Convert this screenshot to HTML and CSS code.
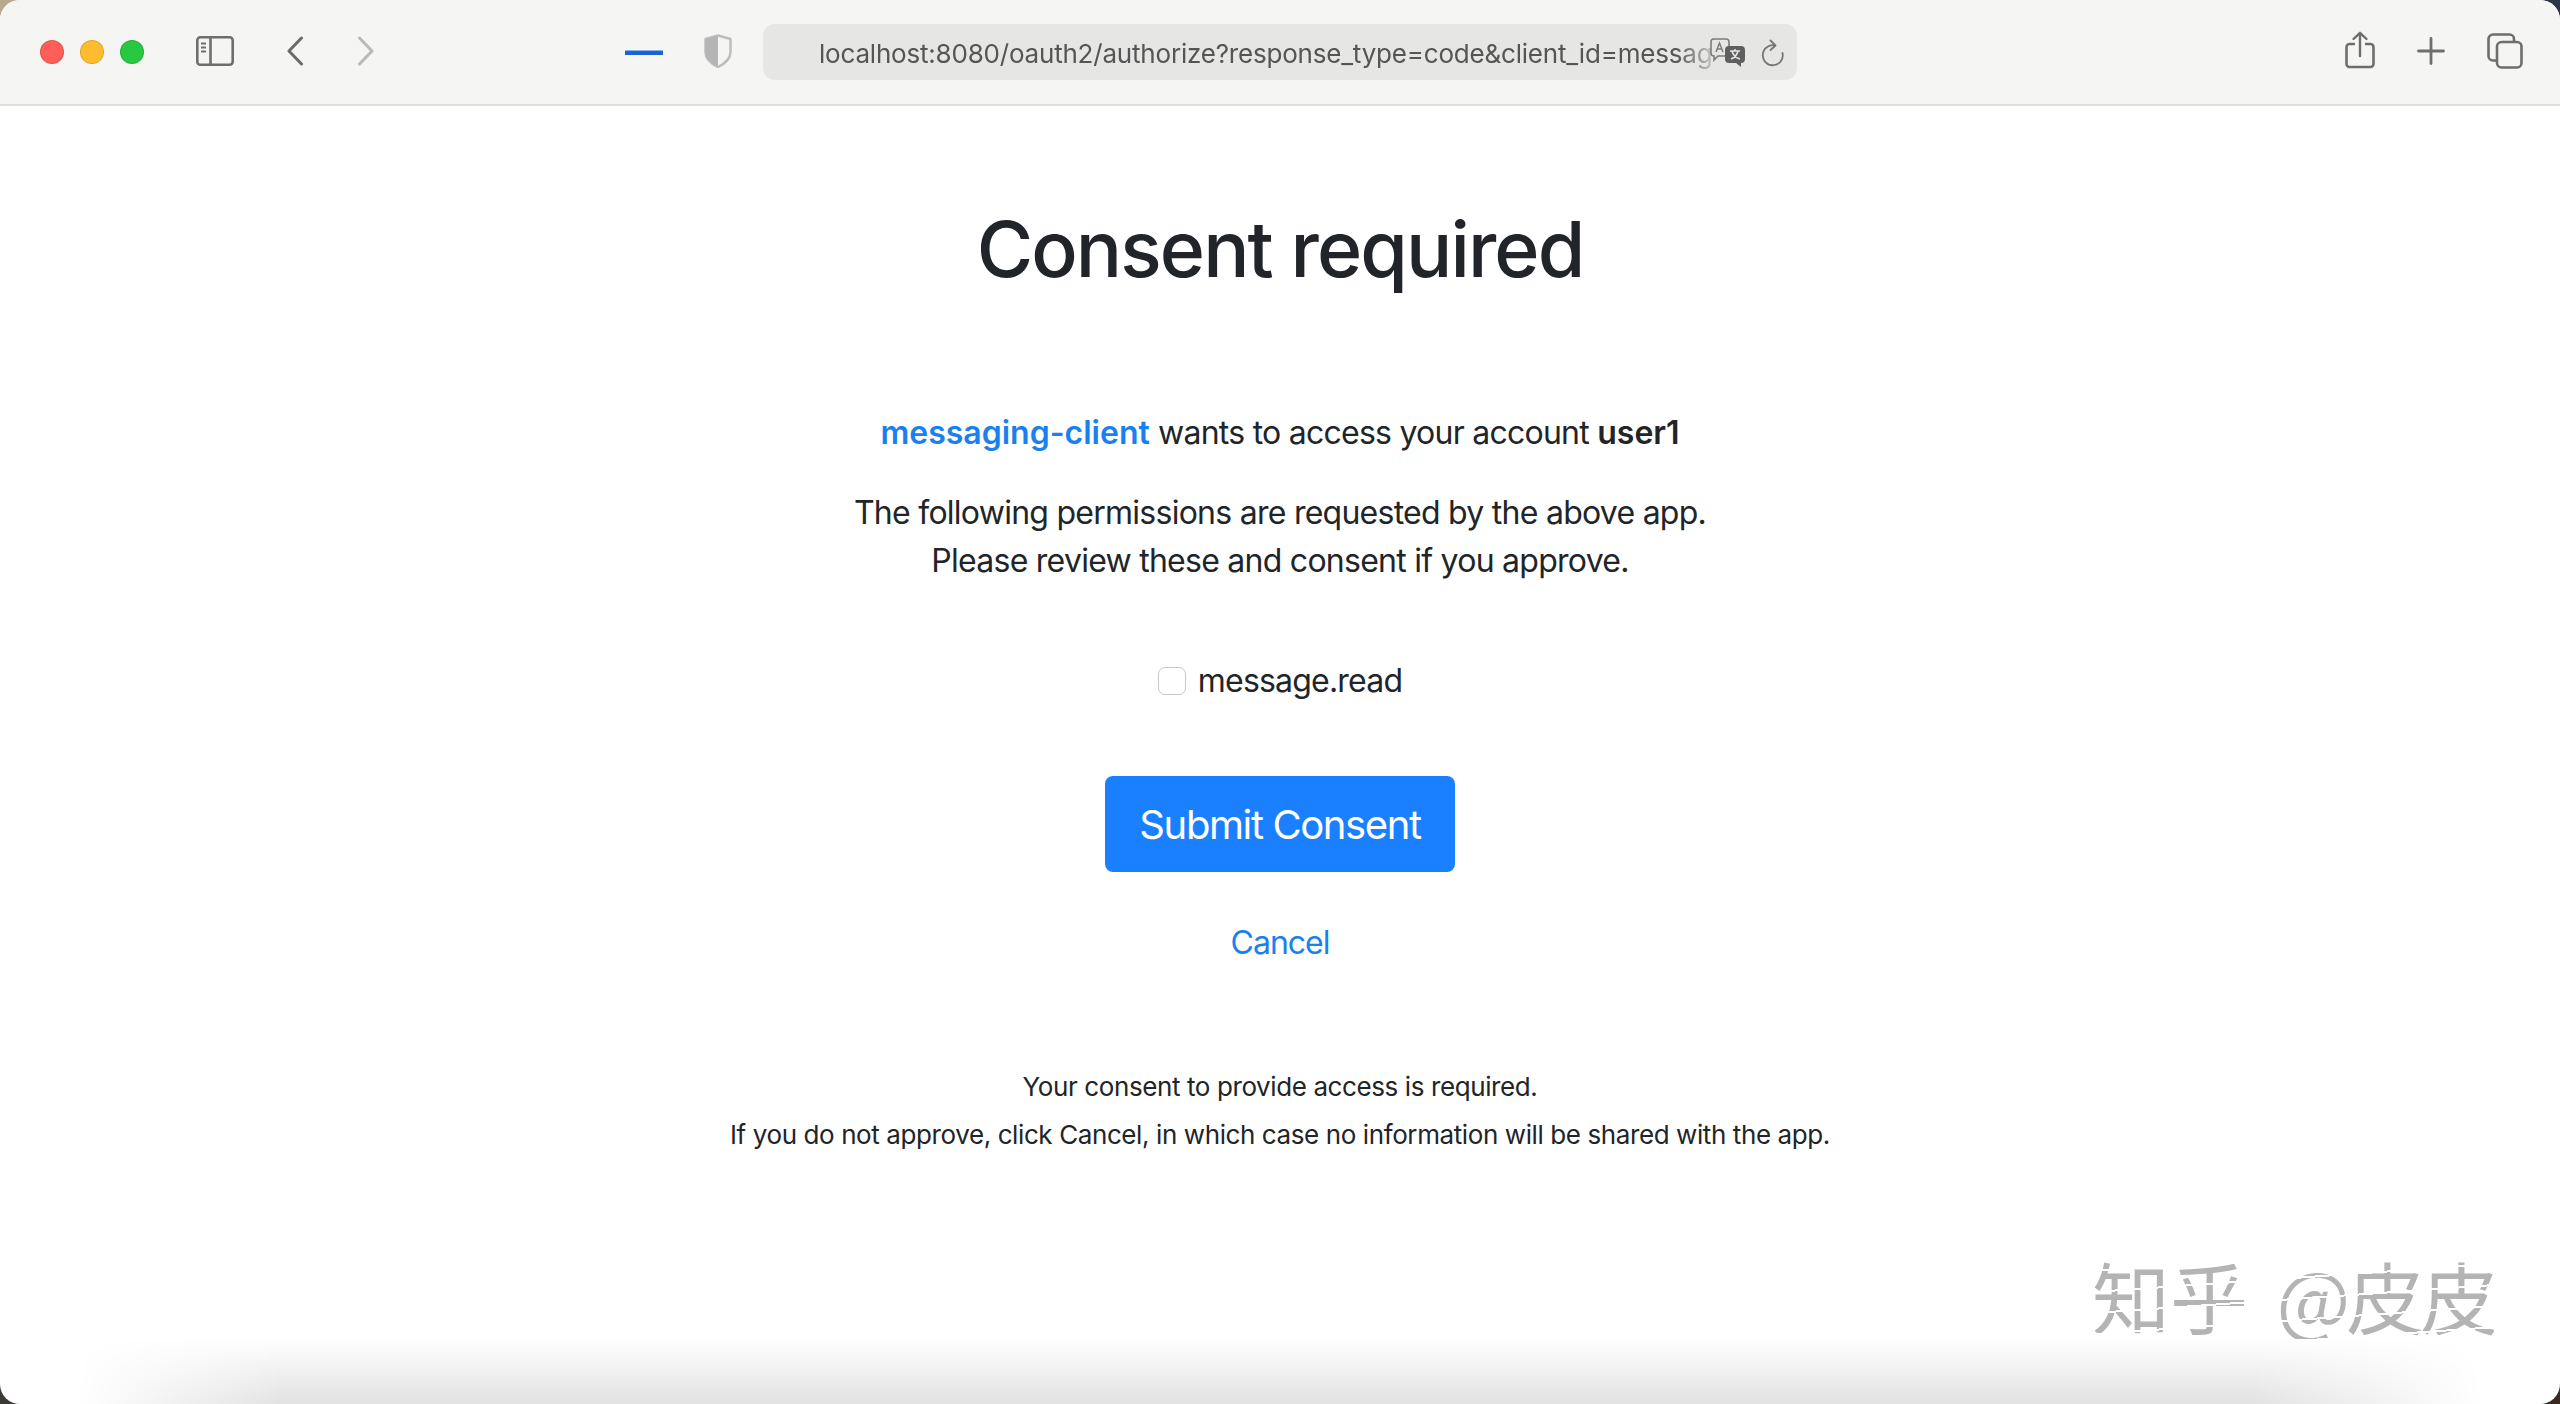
FILE: index.html
```html
<!DOCTYPE html>
<html lang="en">
<head>
<meta charset="utf-8">
<title>Consent required</title>
<link rel="stylesheet" href="styles.css">
</head>
<body>
<div class="window">
  <header class="toolbar">
    <div class="lights">
      <span class="light red"></span>
      <span class="light yellow"></span>
      <span class="light green"></span>
    </div>
    <svg class="icon sidebar" viewBox="0 0 38 30" width="38" height="30">
      <rect x="1.300" y="1.300" width="35.400" height="27.400" rx="3" fill="none" stroke="#6e6e6e" stroke-width="2.600"/>
      <path d="M14.500 1.500V28.500" stroke="#6e6e6e" stroke-width="2.600"/>
      <path d="M5 7.500h5M5 11.500h5M5 15.500h5" stroke="#6e6e6e" stroke-width="2"/>
    </svg>
    <svg class="icon back" viewBox="0 0 18 30" width="18" height="30">
      <path d="M15.500 2L3 15l12.500 13" fill="none" stroke="#6a6a6a" stroke-width="3" stroke-linecap="round" stroke-linejoin="round"/>
    </svg>
    <svg class="icon forward" viewBox="0 0 18 30" width="18" height="30">
      <path d="M2.500 2L15 15 2.500 28" fill="none" stroke="#b9b9b9" stroke-width="3" stroke-linecap="round" stroke-linejoin="round"/>
    </svg>
    <span class="progress"></span>
    <svg class="icon shield" viewBox="0 0 28 34" width="28" height="34">
      <path d="M14 1.500L26.500 5V18C26.500 25 20 30 14 33 8 30 1.500 25 1.500 18V5Z" fill="none" stroke="#bdbdbd" stroke-width="2.500" stroke-linejoin="round"/>
      <path d="M14 1.500L1.500 5V18C1.500 25 8 30 14 33Z" fill="#b5b5b5"/>
    </svg>
    <div class="address">
      <span class="url">localhost:8080/oauth2/authorize?response_type=code&amp;client_id=messag</span>
      <svg class="translate" viewBox="0 0 38 30" width="38" height="30">
        <path d="M4 2h13a3 3 0 0 1 3 3v11a3 3 0 0 1-3 3H9l-4 4v-4a3 3 0 0 1-3-3V5a3 3 0 0 1 2-3Z" fill="none" stroke="#7c7c7c" stroke-width="1.600"/>
        <path d="M7 15l3.500-9 3.500 9M8.300 12h4.400" fill="none" stroke="#7c7c7c" stroke-width="1.500"/>
        <path d="M20 9h12a4 4 0 0 1 4 4v9a4 4 0 0 1-4 4v4l-5-4h-7a4 4 0 0 1-4-4v-9a4 4 0 0 1 4-4Z" fill="#5f5f5f"/>
        <path d="M21 14h10M26 12v2M29 14c-1 4-4 7-7 8M23 14c1 4 4 7 8 8" fill="none" stroke="#e6e6e5" stroke-width="1.500"/>
      </svg>
      <svg class="reload" viewBox="0 0 24 30" width="24" height="30">
        <path d="M14 6.500A10 10 0 1 0 21.500 14" fill="none" stroke="#767676" stroke-width="1.800" stroke-linecap="round"/>
        <path d="M9.500 1.500L14.500 6.500 9.500 11" fill="none" stroke="#767676" stroke-width="1.800" stroke-linecap="round" stroke-linejoin="round"/>
      </svg>
    </div>
    <svg class="icon share" viewBox="0 0 30 38" width="30" height="38">
      <path d="M10 13H4.500A3 3 0 0 0 1.500 16V33A3 3 0 0 0 4.500 36H25.500A3 3 0 0 0 28.500 33V16A3 3 0 0 0 25.500 13H20" fill="none" stroke="#6e6e6e" stroke-width="2.600"/>
      <path d="M15 25V2M8.500 8L15 1.800 21.500 8" fill="none" stroke="#6e6e6e" stroke-width="2.400" stroke-linecap="round" stroke-linejoin="round"/>
    </svg>
    <svg class="icon plus" viewBox="0 0 28 28" width="28" height="28">
      <path d="M14 1.500V26.500M1.500 14H26.500" stroke="#6e6e6e" stroke-width="2.800" stroke-linecap="round"/>
    </svg>
    <svg class="icon tabs" viewBox="0 0 36 36" width="36" height="36">
      <path d="M9 27.500H6A4.500 4.500 0 0 1 1.500 23V6A4.500 4.500 0 0 1 6 1.500H22.500A4.500 4.500 0 0 1 27 6V9" fill="none" stroke="#6e6e6e" stroke-width="2.600"/>
      <rect x="10" y="9" width="24.500" height="25.500" rx="4.500" fill="none" stroke="#6e6e6e" stroke-width="2.600"/>
    </svg>
  </header>

  <main class="content">
    <h1 class="title">Consent required</h1>
    <p class="intro"><span class="client">messaging-client</span> wants to access your account <b class="user">user1</b></p>
    <p class="notice">The following permissions are requested by the above app.<br>Please review these and consent if you approve.</p>
    <label class="scope"><input type="checkbox" class="check"><span>message.read</span></label>
    <button class="submit" type="button">Submit Consent</button>
    <a class="cancel" href="#">Cancel</a>
    <p class="small">Your consent to provide access is required.<br>If you do not approve, click Cancel, in which case no information will be shared with the app.</p>
  </main>
  <div class="shade"></div>
  <div class="watermark">知乎 <span class="handle">@皮皮</span></div>
</div>
</body>
</html>
```
FILE: styles.css
```css
html, body { margin: 0; height: 100%; }
body {
  overflow: hidden;
  background:
    linear-gradient(#b8a98f, #b8a98f) 0 0 / 50% 50% no-repeat,
    linear-gradient(#2a3647, #2a3647) 100% 0 / 50% 50% no-repeat,
    linear-gradient(#3b3a36, #3b3a36) 0 100% / 50% 50% no-repeat,
    linear-gradient(#3a2a1e, #3a2a1e) 100% 100% / 50% 50% no-repeat;
  font-family: Inter, "Noto Sans", sans-serif;
  color: #212529;
}
.window {
  position: relative;
  height: 1404px;
  background: #fff;
  border-radius: 20px;
  overflow: hidden;
}
.toolbar {
  display: flex;
  align-items: center;
  height: 102px;
  padding: 0 0 2px 40px;
  background: #f5f5f4;
  border-bottom: 2px solid #dfdfdf;
}
.lights { display: flex; gap: 16px; margin: 1px 52px 0 0; }
.light { width: 24px; height: 24px; border-radius: 50%; box-sizing: border-box; border: 1px solid rgba(0,0,0,.12); }
.red { background: #ff5f57; }
.yellow { background: #febc2e; }
.green { background: #28c840; }
.icon { flex: none; }
.sidebar { margin-right: 52px; }
.back { margin-right: 53px; }
.forward { margin-right: 250px; }
.progress { flex: none; width: 38px; height: 4px; margin: 3px 41px 0 0; background: #1c62d4; border-top: 1px solid #8ab6ee; }
.shield { margin-right: 31px; }
.address {
  flex: none;
  display: flex;
  align-items: center;
  position: relative;
  width: 1034px;
  height: 56px;
  margin: 2px 548px 0 0;
  box-sizing: border-box;
  padding: 2px 0 0 56px;
  background: #e6e6e5;
  border-radius: 12px;
}
.url {
  white-space: nowrap;
  font-size: 26px;
  letter-spacing: -0.2px;
  color: #555;
  -webkit-mask-image: linear-gradient(90deg, #000 96%, rgba(0,0,0,.25) 100%);
  mask-image: linear-gradient(90deg, #000 96%, rgba(0,0,0,.25) 100%);
}
.translate { position: absolute; left: 946px; top: 13px; }
.reload { position: absolute; left: 998px; top: 15px; }
.share { margin: 0 42px 3px 0; }
.plus { margin: 0 42px 1px 0; }
.content {
  display: flex;
  flex-direction: column;
  align-items: center;
  text-align: center;
}
.title { margin: 95px 0 0; font-size: 77px; font-weight: 500; line-height: 96px; letter-spacing: -1.9px; color: #212529; }
.intro { margin: 112px 0 0; font-size: 32px; line-height: 48px; letter-spacing: -0.75px; }
.client { font-weight: 600; letter-spacing: 0; color: #1a7fef; }
.user { font-weight: 600; letter-spacing: 0; }
.notice { margin: 32px 0 0; font-size: 32px; line-height: 48px; letter-spacing: -0.74px; }
.scope { display: flex; align-items: center; gap: 12px; margin-top: 72px; font-size: 32px; line-height: 48px; letter-spacing: -0.8px; }
.check { appearance: none; margin: 0; width: 28px; height: 28px; border: 1.5px solid #c6c6c6; border-radius: 7px; background: #fff; }
.submit { margin-top: 71px; width: 350px; height: 96px; border: 0; border-radius: 8px; background: #1a80ff; color: #fff; font: 400 40px Inter, sans-serif; letter-spacing: -1.4px; }
.cancel { margin-top: 47px; font-size: 32px; line-height: 48px; letter-spacing: -1px; color: #1a7fef; text-decoration: none; }
.small { margin: 96px 0 0; font-size: 26px; line-height: 48px; letter-spacing: -0.4px; }
.shade {
  position: absolute;
  left: 0; right: 0; bottom: 0;
  height: 66px;
  background: linear-gradient(rgba(0,0,0,0), rgba(0,0,0,.115));
  -webkit-mask-image: linear-gradient(90deg, transparent 3%, #000 11%, #000 88%, transparent 97%);
  mask-image: linear-gradient(90deg, transparent 3%, #000 11%, #000 88%, transparent 97%);
}
.watermark {
  position: absolute;
  left: 2092px;
  top: 1251px;
  font-family: "Noto Sans CJK SC", sans-serif;
  font-size: 78px;
  line-height: 88px;
  word-spacing: 11px;
  color: #b4b4b4;
  white-space: nowrap;
  -webkit-mask-image: repeating-linear-gradient(176deg, #000 0 19px, transparent 19px 21px);
  mask-image: repeating-linear-gradient(176deg, #000 0 19px, transparent 19px 21px);
}
.handle { letter-spacing: -4px; }
```
